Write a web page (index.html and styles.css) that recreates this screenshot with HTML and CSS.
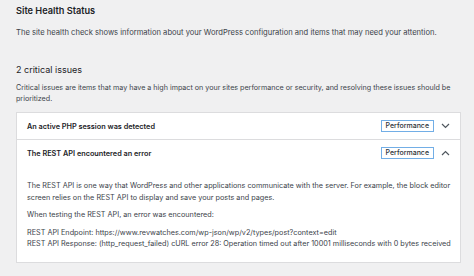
FILE: index.html
```html
<!DOCTYPE html>
<html lang="en">
<head>
<meta charset="UTF-8" />
<meta name="viewport" content="width=device-width, initial-scale=1" />
<title>Site Health</title>
<link rel="stylesheet" href="styles.css">
</head>
<body>

<div class="site-health">
  <h2 class="section-title">Site Health Status</h2>
  <p class="intro">The site health check shows information about your WordPress configuration and items that may need your attention.</p>

  <h3 class="issues-count">2 critical issues</h3>
  <p class="issues-desc">Critical issues are items that may have a high impact on your sites performance or security, and resolving these issues should be prioritized.</p>

  <div class="accordion">
    <div class="accordion-item">
      <button class="accordion-head" aria-expanded="false">
        <span class="item-title">An active PHP session was detected</span>
        <span class="badge">Performance</span>
        <svg class="chevron" width="9" height="6" viewBox="0 0 9 6"><polyline points="1,1 4.5,4.5 8,1" /></svg>
      </button>
    </div>
    <div class="accordion-item open">
      <button class="accordion-head" aria-expanded="true">
        <span class="item-title">The REST API encountered an error</span>
        <span class="badge">Performance</span>
        <svg class="chevron" width="9" height="6" viewBox="0 0 9 6"><polyline points="1,5 4.5,1.5 8,5" /></svg>
      </button>
      <div class="accordion-body">
        <p>The REST API is one way that WordPress and other applications communicate with the server. For example, the block editor screen relies on the REST API to display and save your posts and pages.</p>
        <p>When testing the REST API, an error was encountered:</p>
        <p>REST API Endpoint: https://www.revwatches.com/wp-json/wp/v2/types/post?context=edit<br>
        REST API Response: (http_request_failed) cURL error 28: Operation timed out after 10001 milliseconds with 0 bytes received</p>
      </div>
    </div>
  </div>
</div>

</body>
</html>
```

FILE: styles.css
```css
* {
  margin: 0; padding: 0; box-sizing: border-box;
}
html, body {
  height: 100%;
  width: 100%;
  overflow: hidden;
  font-family: Inter, 'Noto Sans', sans-serif;
  background: #f0f0f1;
  color: #3c434a;
}
.site-health {
  padding: 4px 13px 0 16px;
}
.section-title {
  font-size: 9.2px;
  line-height: 14px;
  font-weight: 600;
  color: #1d2327;
}
.intro {
  margin-top: 9px;
  font-size: 7.6px;
  line-height: 12px;
}
.issues-count {
  margin-top: 24px;
  font-size: 9px;
  line-height: 14px;
  font-weight: 400;
  color: #1d2327;
}
.issues-desc {
  margin-top: 5px;
  font-size: 7.15px;
  line-height: 11px;
}
.accordion {
  margin-top: 8px;
  background: #fff;
  border: 1px solid #dcdcde;
}
.accordion-item + .accordion-item {
  border-top: 1px solid #dcdcde;
}
.accordion-head {
  display: flex;
  align-items: center;
  width: 100%;
  height: 26px;
  padding: 0 10px 0 10px;
  background: none;
  border: 0;
  font-family: inherit;
  text-align: left;
  cursor: pointer;
}
.item-title {
  flex: 1;
  font-size: 7.3px;
  font-weight: 600;
  color: #1d2327;
}
.badge {
  padding: 0 4px;
  height: 12px;
  line-height: 10px;
  border: 1px solid #72aee6;
  font-size: 7px;
  font-weight: 500;
  color: #2c3338;
}
.chevron {
  margin-left: 7px;
  fill: none;
  stroke: #50575e;
  stroke-width: 1.2;
}
.accordion-body {
  padding: 14px 3px 12px 10px;
  font-size: 7.25px;
  line-height: 11.5px;
}
.accordion-body p + p {
  margin-top: 6px;
}
```
